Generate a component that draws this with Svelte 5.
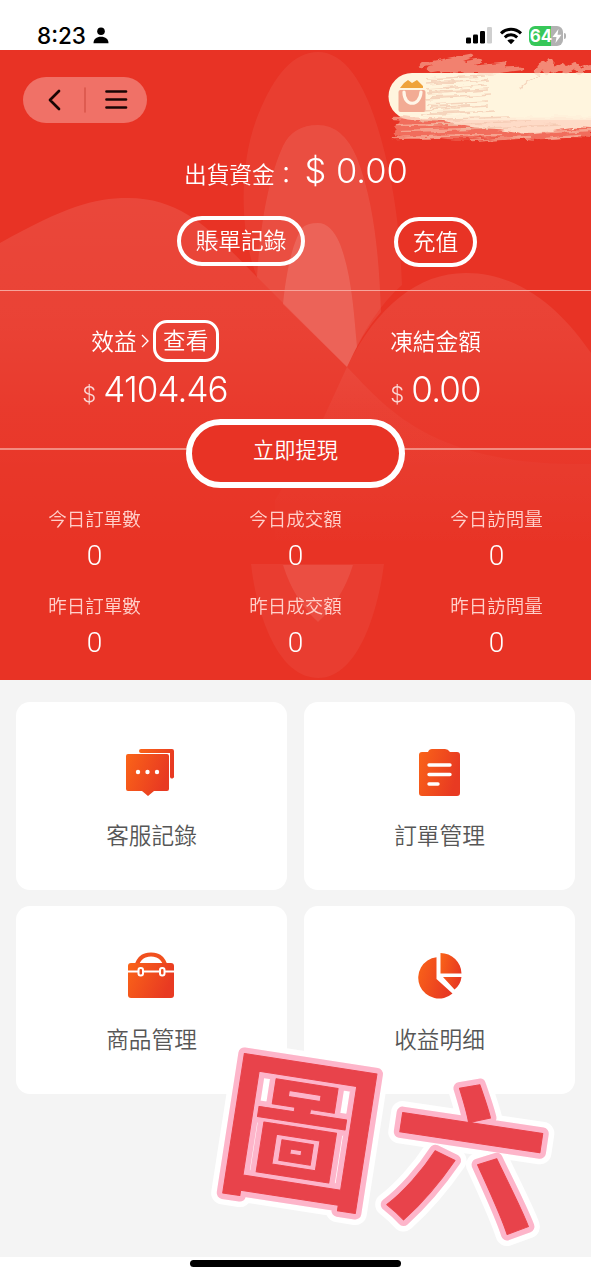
<script>
    const today = ['今日訂單數', '今日成交額', '今日訪問量'];
    const yesterday = ['昨日訂單數', '昨日成交額', '昨日訪問量'];
    const stats = [...today, ...yesterday].map((label) => ({ label, value: 0 }));

    const menu = [
        { icon: 'chat', label: '客服記錄' },
        { icon: 'orders', label: '訂單管理' },
        { icon: 'goods', label: '商品管理' },
        { icon: 'income', label: '收益明细' }
    ];
</script>

<div class="screen">
    <header class="status">
        <div class="clock">
            <span>8:23</span>
            <svg width="16" height="17" viewBox="0 0 16 17">
                <circle cx="8" cy="4.200" r="3.800" />
                <path d="M.5 16.200c0-4.200 3-6.500 7.500-6.500s7.500 2.300 7.500 6.500z" />
            </svg>
        </div>
        <div class="signals">
            <svg width="27" height="17" viewBox="0 0 27 17">
                <rect x="0" y="10.500" width="5" height="6" rx="1.200" />
                <rect x="7" y="7.500" width="5" height="9" rx="1.200" />
                <rect x="14" y="4" width="5" height="12.500" rx="1.200" />
                <rect x="21" y="0" width="5" height="16.500" rx="1.200" fill="#cfcfcf" />
            </svg>
            <svg width="24" height="18" viewBox="0 0 24 18">
                <path d="M2 6.300C8 .9 16 .9 22 6.300M5.800 10.300C9.500 7 14.500 7 18.200 10.300" fill="none" stroke="#000" stroke-width="3.100" />
                <path d="M12 17.300 8.300 13.600C10.400 11.800 13.600 11.800 15.700 13.600z" />
            </svg>
            <div class="battery">
                <span>64</span>
                <svg width="10" height="14" viewBox="0 0 10 14"><path d="M6.500 0 .5 8H4.500L3.500 14 9.500 5.800H5.500z" fill="#fff" /></svg>
            </div>
        </div>
    </header>

    <section class="hero">
        <svg class="backdrop" width="591" height="630" viewBox="0 50 591 630">
            <defs>
                <linearGradient id="hill" gradientUnits="userSpaceOnUse" x1="0" y1="200" x2="0" y2="550">
                    <stop offset="0" stop-color="#fff" stop-opacity=".1" />
                    <stop offset=".35" stop-color="#fff" stop-opacity=".075" />
                    <stop offset=".6" stop-color="#fff" stop-opacity=".035" />
                    <stop offset="1" stop-color="#fff" stop-opacity="0" />
                </linearGradient>
                <filter id="rough" x="-10%" y="-30%" width="120%" height="160%">
                    <feTurbulence type="fractalNoise" baseFrequency=".06 .2" numOctaves="3" seed="7" result="n" />
                    <feDisplacementMap in="SourceGraphic" in2="n" scale="6" xChannelSelector="R" yChannelSelector="G" />
                    <feGaussianBlur stdDeviation=".7" />
                </filter>
            </defs>
            <path d="M257 277C240 235 238 165 258 115Q283 52 318 52Q356 52 380 135C397 195 400 240 402 285Q371 312 347 367L257 277z" fill="#fff" fill-opacity=".055" />
            <path d="M257 277C261 215 270 175 283 146Q293 125 318 125Q343 125 357 158C375 205 379 260 381 312Q362 333 347 367z" fill="#fff" fill-opacity=".085" />
            <path d="M283 304C287 265 294 240 302 228Q307 223 318 223Q331 223 340 244C352 275 354 315 357 347L347 367z" fill="#fff" fill-opacity=".12" />
            <path d="M0 243C65 207 93 198 128 198C185 198 215 235 257 277L347 367C386 407 431 467 591 464V560H0z" fill="url(#hill)" />
            <path d="M347 367C377 306 418 273 466 273C524 273 565 315 591 353V560H275V500L318 430z" fill="url(#hill)" />
            <path d="M251 564H384C379 605 360 678 318 678S256 610 251 564z" fill="#fff" fill-opacity=".05" />
            <path d="M283 565H353Q342 600 318 622Q294 600 283 565z" fill="#fff" fill-opacity=".09" />

            <path d="M591 73H412a23.500 23.500 0 0 0 0 47H591z" fill="#fff5de" />
            <path d="M400 88 404 83 408 80 412 83 417 80 423 86V88z" fill="#efa33a" />
            <rect x="398.500" y="90" width="27" height="22" rx="2" fill="#f2ab94" />
            <path d="M404 92C404 107 420 107 421 92" fill="none" stroke="#fff6e8" stroke-width="3.200" stroke-linecap="round" />
            <!-- hand scribble over the shop badge -->
            <g filter="url(#rough)" stroke-linecap="round" stroke-linejoin="round">
                <path d="M420 118H591V138C565 135 550 143 525 139C495 134 470 143 440 138C425 140 405 138 394 135L400 116z" fill="#f9a893" fill-opacity=".5" />
                <path d="M425 116H591V128C570 125 550 134 525 134C495 126 480 130 460 125z" fill="#fff0da" fill-opacity=".85" />
                <g fill="none" stroke="#fcd0ba">
                    <path d="M423 65 471 56 430 69 480 61 440 71 503 65 465 70 521 68 480 73" stroke-width="4.500" opacity=".5" />
                    <path d="M538 72 543 65 547 71 550 61 554 71 562 66 566 71 574 66 580 71 591 67" stroke-width="6" opacity=".55" />
                    <path d="M394 118 460 120M397 125 490 123M402 131 470 129M393 138 440 137M430 136 500 135M470 141 530 137M530 133 591 130M545 138 580 135" stroke-width="2.500" opacity=".55" />
                </g>
            </g>
            <g filter="url(#rough)" fill="none" stroke="#efbfa6" stroke-width="1.300" opacity=".6">
                <path d="M425 79 485 76M426 84 490 80M425 89 486 85M427 94 488 90M425 99 492 95M427 104 489 101M425 110 487 106M421 115 495 111M420 120 510 117M425 125 530 121M460 129 560 125" />
                <path d="M430 82 455 81M430 92 470 90M430 97 465 96M430 107 470 105M430 113 465 112" stroke-width="2.200" />
                <path d="M520 89Q528 80 540 75" />
            </g>
        </svg>

        <div class="funds">
            <div class="capsule">
                <svg width="124" height="46" viewBox="0 0 124 46" fill="none" stroke="#180504" stroke-width="2.700" stroke-linecap="round" stroke-linejoin="round">
                    <path d="M36 14 27 23 36 32M83.500 14.500H103M83.500 22.500H103M83.500 30.500H103" />
                    <path d="M62 11V35" stroke="#d85548" stroke-width="1.500" />
                </svg>
            </div>
            <div class="balance">
                <span>出貨資金：</span><strong>$ 0.00</strong>
            </div>
            <div class="actions">
                <button class="pill bill">賬單記錄</button>
                <button class="pill topup">充值</button>
            </div>
        </div>

        <div class="income">
            <div class="half">
                <div class="caption">
                    效益
                    <svg width="8" height="14" viewBox="0 0 8 14"><path d="M1 1 7 7 1 13" fill="none" stroke="#fff" stroke-width="1.300" /></svg>
                    <button class="view">查看</button>
                </div>
                <div class="amount"><small>$</small>4104.46</div>
            </div>
            <div class="half">
                <div class="caption">凍結金額</div>
                <div class="amount"><small>$</small>0.00</div>
            </div>
            <button class="withdraw">立即提現</button>
        </div>

        <div class="stats">
            {#each stats as item}
                <div class="stat">
                    <span>{item.label}</span>
                    <b>{item.value}</b>
                </div>
            {/each}
        </div>
    </section>

    <main class="menu">
        {#each menu as item}
            <div class="card">
                <svg width="50" height="50" viewBox="0 0 50 50">
                    <defs>
                        <linearGradient id="g-{item.icon}" x1="0" y1="0" x2="1" y2=".35">
                            <stop offset="0" stop-color="#fa6418" />
                            <stop offset="1" stop-color="#e83a22" />
                        </linearGradient>
                    </defs>
                    <g fill="url(#g-{item.icon})">
                        {#if item.icon === 'chat'}
                            <path d="M2 6H41a2 2 0 0 1 2 2V41a2 2 0 0 1-2 2H28L22 48 16 43H2a2 2 0 0 1-2-2V8a2 2 0 0 1 2-2z" />
                            <path d="M15 1H46a2 2 0 0 1 2 2V28a2 2 0 0 1-4 1V5H15a2 2 0 0 1 0-4z" />
                            <g fill="#fff"><circle cx="12" cy="24" r="2.200" /><circle cx="21.500" cy="24" r="2.200" /><circle cx="31" cy="24" r="2.200" /></g>
                        {:else if item.icon === 'orders'}
                            <path d="M8 4H14Q15 1 18 1H31Q34 1 36 4H43a3 3 0 0 1 3 3V45a3 3 0 0 1-3 3H8a3 3 0 0 1-3-3V7a3 3 0 0 1 3-3z" />
                            <path d="M15 17H36M15 26.500H36M15 36H24" stroke="#fff" stroke-width="3.400" stroke-linecap="round" />
                        {:else if item.icon === 'goods'}
                            <path d="M11 12Q14 5 19 3.500Q25 1.500 31 3.500Q36 5 39 12" fill="none" stroke="#f1501e" stroke-width="4" />
                            <path d="M5 11H45a3 3 0 0 1 3 3V43a3 3 0 0 1-3 3H5a3 3 0 0 1-3-3V14a3 3 0 0 1 3-3z" />
                            <path d="M2 19.500H48" stroke="#fff" stroke-width="2" />
                            <g stroke="#fff" stroke-width="2"><rect x="12.500" y="16" width="4.500" height="7.500" rx="2" /><rect x="34" y="16" width="4.500" height="7.500" rx="2" /></g>
                        {:else}
                            <path d="M22.500 5.300A20.700 20.700 0 1 0 38.500 41.500L22.500 27z" />
                            <path d="M26.500 1A21 21 0 0 1 47.500 21.500H26.500zM29 25H47.500Q46.500 33 40.500 37.500z" />
                        {/if}
                    </g>
                </svg>
                <span>{item.label}</span>
            </div>
        {/each}
    </main>

    <footer><i></i></footer>

    <svg class="sticker" width="421" height="299" viewBox="170 980 421 299">
        {#each ['halo', 'rim', 'ink'] as layer}
            <g class={layer}>
                <text transform="translate(299.500 1134) rotate(8.800)" y="56">圖</text>
                <text transform="translate(467 1160) rotate(8.500)" y="56">六</text>
            </g>
        {/each}
    </svg>
</div>

<style>
    :global(body) {
        background: #fff;
    }

    .screen {
        position: relative;
        width: 591px;
        height: 1279px;
        overflow: hidden;
        font-family: Inter, "Noto Sans CJK TC", sans-serif;
        font-weight: 350;
        display: flex;
        flex-direction: column;
    }

    button {
        background: none;
        color: inherit;
        font: inherit;
        padding: 0;
        box-sizing: border-box;
    }

    .status {
        height: 50px;
        padding: 22px 28px 0 37px;
        box-sizing: border-box;
        display: flex;
        justify-content: space-between;
    }

    .clock, .signals {
        display: flex;
        align-items: center;
        height: 27px;
    }

    .clock {
        font-size: 22.500px;
        font-weight: 550;
        gap: 7px;
    }

    .signals {
        gap: 6px;
    }

    .battery {
        position: relative;
        width: 34px;
        height: 20px;
        border-radius: 6px;
        background: linear-gradient(90deg, #37c759 65%, #b2b2b2 65%);
        color: #fff;
        font-size: 17px;
        font-weight: 700;
        display: flex;
        align-items: center;
        justify-content: center;
    }

    .battery::after {
        content: "";
        position: absolute;
        right: -3px;
        top: 7px;
        width: 2px;
        height: 6px;
        border-radius: 0 2px 2px 0;
        background: #b2b2b2;
    }

    .hero {
        position: relative;
        height: 630px;
        background: #e83325;
        color: #fff;
    }

    .backdrop {
        position: absolute;
        left: 0;
        top: 0;
    }

    .funds {
        position: relative;
        height: 241px;
        box-sizing: border-box;
        padding-top: 27px;
        border-bottom: 1px solid #f6a49b;
    }

    .capsule {
        width: 124px;
        height: 46px;
        margin-left: 23px;
        border-radius: 23px;
        background: #f07167;
    }

    .balance {
        height: 40px;
        margin-top: 28px;
        padding-left: 184px;
        display: flex;
        align-items: baseline;
        font-size: 22.700px;
        line-height: 40px;
    }

    .balance strong {
        font-size: 34.500px;
        font-weight: 330;
        margin-left: 7px;
    }

    .actions {
        display: flex;
        align-items: flex-start;
        padding: 25px 0 0 177px;
    }

    .pill {
        height: 50px;
        border: 4px solid #fff;
        border-radius: 25px;
        font-size: 22.700px;
        line-height: 40px;
    }

    .bill {
        width: 128px;
    }

    .topup {
        width: 83px;
        margin: 1px 0 0 89px;
    }

    .income {
        position: relative;
        height: 159px;
        box-sizing: border-box;
        padding: 26px 20px 0 10px;
        border-bottom: 2px solid #f28b80;
        display: grid;
        grid-template-columns: 290px 1fr;
    }

    .half {
        text-align: center;
    }

    .caption {
        height: 47px;
        display: flex;
        align-items: center;
        justify-content: center;
        gap: 4px;
        font-size: 22.700px;
    }

    .view {
        width: 66px;
        height: 42px;
        border: 3px solid #fff;
        border-radius: 14px;
        line-height: 34px;
    }

    .amount {
        font-size: 35px;
        font-weight: 330;
        letter-spacing: -.9px;
        line-height: 50px;
    }

    .amount small {
        font-size: 22px;
        margin-right: 8px;
        opacity: .8;
    }

    .withdraw {
        position: absolute;
        left: 186px;
        top: 128px;
        width: 219px;
        height: 69px;
        border: 6px solid #fff;
        border-radius: 35px;
        background: #e83325;
        font-size: 21.200px;
        padding-bottom: 11px;
    }

    .stats {
        position: relative;
        padding: 55px 0 0;
        margin: 0 -6px 0 -6px;
        display: grid;
        grid-template-columns: repeat(3, 1fr);
        grid-auto-rows: 87px;
    }

    .stat {
        display: flex;
        flex-direction: column;
        align-items: center;
    }

    .stat span {
        font-size: 18.500px;
        line-height: 28px;
        color: #ffd0ca;
    }

    .stat b {
        font-family: Roboto, sans-serif;
        font-size: 28px;
        font-weight: 300;
        line-height: 45px;
    }

    .menu {
        flex: 1;
        background: #f4f4f4;
        padding: 22px 16px 0;
        display: grid;
        grid-template-columns: 271px 271px;
        grid-auto-rows: 188px;
        align-content: start;
        gap: 16px 17px;
    }

    .card {
        background: #fff;
        border-radius: 14px;
        display: flex;
        flex-direction: column;
        align-items: center;
        padding-top: 46px;
        box-sizing: border-box;
    }

    .card svg {
        margin-right: 2px;
    }

    .card span {
        margin-top: 21px;
        font-size: 22.700px;
        line-height: 34px;
        color: #565656;
    }

    footer {
        height: 22px;
        background: #fff;
        display: flex;
        justify-content: center;
    }

    footer i {
        width: 211px;
        height: 7px;
        margin-top: 3px;
        border-radius: 4px;
        background: #000;
    }

    .sticker {
        position: absolute;
        left: 170px;
        top: 980px;
        overflow: visible;
        font-family: "Noto Sans CJK TC", sans-serif;
        font-size: 156px;
        font-weight: 700;
        text-anchor: middle;
        stroke-linejoin: round;
    }

    .halo {
        fill: #fff;
        stroke: #fff;
        stroke-width: 23px;
    }

    .rim {
        fill: #fdb5ca;
        stroke: #fdb5ca;
        stroke-width: 12px;
    }

    .ink {
        fill: #e8434b;
        stroke: #e8434b;
        stroke-width: 1px;
    }
</style>
